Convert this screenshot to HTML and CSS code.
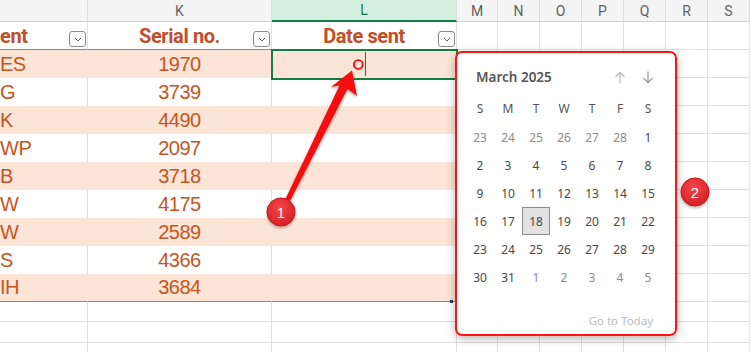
FILE: index.html
```html
<!DOCTYPE html>
<html>
<head>
<meta charset="utf-8">
<link rel="stylesheet" href="styles.css">
</head>
<body>
<div class="sheet">
  <div class="row colhead">
    <div class="cell"></div><div class="cell">K</div><div class="cell sel">L</div><div class="cell">M</div><div class="cell">N</div><div class="cell">O</div><div class="cell">P</div><div class="cell">Q</div><div class="cell">R</div><div class="cell">S</div>
  </div>
  <div class="row hrow">
    <div class="cell t j"><span class="jt">ent</span><span class="dd"><svg viewBox="0 0 8 5" width="8" height="5"><path d="M1 1l3 3 3-3" fill="none" stroke="#666" stroke-width="1"/></svg></span></div>
    <div class="cell t">Serial no.<span class="dd"><svg viewBox="0 0 8 5" width="8" height="5"><path d="M1 1l3 3 3-3" fill="none" stroke="#666" stroke-width="1"/></svg></span></div>
    <div class="cell t">Date sent<span class="dd"><svg viewBox="0 0 8 5" width="8" height="5"><path d="M1 1l3 3 3-3" fill="none" stroke="#666" stroke-width="1"/></svg></span></div>
    <div class="cell"></div><div class="cell"></div><div class="cell"></div><div class="cell"></div><div class="cell"></div><div class="cell"></div><div class="cell"></div>
  </div>
  <div class="row drow band">
    <div class="cell t j"><span class="jt">ES</span></div><div class="cell t">1970</div><div class="cell t active"><span class="caret"></span><span class="selbox"></span></div>
    <div class="cell"></div><div class="cell"></div><div class="cell"></div><div class="cell"></div><div class="cell"></div><div class="cell"></div><div class="cell"></div>
  </div>
  <div class="row drow">
    <div class="cell t j"><span class="jt">G</span></div><div class="cell t">3739</div><div class="cell t"></div>
    <div class="cell"></div><div class="cell"></div><div class="cell"></div><div class="cell"></div><div class="cell"></div><div class="cell"></div><div class="cell"></div>
  </div>
  <div class="row drow band">
    <div class="cell t j"><span class="jt">K</span></div><div class="cell t">4490</div><div class="cell t"></div>
    <div class="cell"></div><div class="cell"></div><div class="cell"></div><div class="cell"></div><div class="cell"></div><div class="cell"></div><div class="cell"></div>
  </div>
  <div class="row drow">
    <div class="cell t j"><span class="jt">WP</span></div><div class="cell t">2097</div><div class="cell t"></div>
    <div class="cell"></div><div class="cell"></div><div class="cell"></div><div class="cell"></div><div class="cell"></div><div class="cell"></div><div class="cell"></div>
  </div>
  <div class="row drow band">
    <div class="cell t j"><span class="jt">B</span></div><div class="cell t">3718</div><div class="cell t"></div>
    <div class="cell"></div><div class="cell"></div><div class="cell"></div><div class="cell"></div><div class="cell"></div><div class="cell"></div><div class="cell"></div>
  </div>
  <div class="row drow">
    <div class="cell t j"><span class="jt">W</span></div><div class="cell t">4175</div><div class="cell t"></div>
    <div class="cell"></div><div class="cell"></div><div class="cell"></div><div class="cell"></div><div class="cell"></div><div class="cell"></div><div class="cell"></div>
  </div>
  <div class="row drow band">
    <div class="cell t j"><span class="jt">W</span></div><div class="cell t">2589</div><div class="cell t"></div>
    <div class="cell"></div><div class="cell"></div><div class="cell"></div><div class="cell"></div><div class="cell"></div><div class="cell"></div><div class="cell"></div>
  </div>
  <div class="row drow">
    <div class="cell t j"><span class="jt">S</span></div><div class="cell t">4366</div><div class="cell t"></div>
    <div class="cell"></div><div class="cell"></div><div class="cell"></div><div class="cell"></div><div class="cell"></div><div class="cell"></div><div class="cell"></div>
  </div>
  <div class="row drow band last">
    <div class="cell t j"><span class="jt">IH</span></div><div class="cell t">3684</div><div class="cell t"><span class="handle"></span></div>
    <div class="cell"></div><div class="cell"></div><div class="cell"></div><div class="cell"></div><div class="cell"></div><div class="cell"></div><div class="cell"></div>
  </div>
  <div class="row erow e1">
    <div class="cell"></div><div class="cell"></div><div class="cell"></div><div class="cell"></div><div class="cell"></div><div class="cell"></div><div class="cell"></div><div class="cell"></div><div class="cell"></div><div class="cell"></div>
  </div>
  <div class="row erow">
    <div class="cell"></div><div class="cell"></div><div class="cell"></div><div class="cell"></div><div class="cell"></div><div class="cell"></div><div class="cell"></div><div class="cell"></div><div class="cell"></div><div class="cell"></div>
  </div>
  <div class="row erow">
    <div class="cell"></div><div class="cell"></div><div class="cell"></div><div class="cell"></div><div class="cell"></div><div class="cell"></div><div class="cell"></div><div class="cell"></div><div class="cell"></div><div class="cell"></div>
  </div>
</div>

<div class="cal">
  <div class="cal-head">
    <span class="cal-title">March 2025</span>
    <span class="cal-nav">
      <span class="navbtn"><svg viewBox="0 0 12 14" width="12" height="13"><path d="M6 13.5V1.5M1.2 6.3L6 1.5l4.8 4.8" fill="none" stroke="#a9a9a9" stroke-width="1.1"/></svg></span>
      <span class="navbtn"><svg viewBox="0 0 12 14" width="12" height="13"><path d="M6 0.5v12M1.2 7.7L6 12.5l4.8-4.8" fill="none" stroke="#8a8a8a" stroke-width="1.1"/></svg></span>
    </span>
  </div>
  <div class="cal-grid">
    <span class="wd">S</span><span class="wd">M</span><span class="wd">T</span><span class="wd">W</span><span class="wd">T</span><span class="wd">F</span><span class="wd">S</span>
    <span class="d out">23</span><span class="d out">24</span><span class="d out">25</span><span class="d out">26</span><span class="d out">27</span><span class="d out">28</span><span class="d">1</span>
    <span class="d">2</span><span class="d">3</span><span class="d">4</span><span class="d">5</span><span class="d">6</span><span class="d">7</span><span class="d">8</span>
    <span class="d">9</span><span class="d">10</span><span class="d">11</span><span class="d">12</span><span class="d">13</span><span class="d">14</span><span class="d">15</span>
    <span class="d">16</span><span class="d">17</span><span class="d today">18</span><span class="d">19</span><span class="d">20</span><span class="d">21</span><span class="d">22</span>
    <span class="d">23</span><span class="d">24</span><span class="d">25</span><span class="d">26</span><span class="d">27</span><span class="d">28</span><span class="d">29</span>
    <span class="d">30</span><span class="d">31</span><span class="d out">1</span><span class="d out">2</span><span class="d out">3</span><span class="d out">4</span><span class="d out">5</span>
  </div>
  <div class="cal-foot">Go to Today</div>
</div>

<svg class="annot" width="750" height="352" viewBox="0 0 750 352">
  <defs>
    <radialGradient id="bg" cx="0.45" cy="0.35" r="0.7">
      <stop offset="0" stop-color="#f2474b"/>
      <stop offset="1" stop-color="#d61c24"/>
    </radialGradient>
    <filter id="sh" x="-50%" y="-50%" width="200%" height="200%">
      <feDropShadow dx="0" dy="1.5" stdDeviation="1.5" flood-color="#000" flood-opacity="0.35"/>
    </filter>
  </defs>
  <circle cx="358.3" cy="64.5" r="4.4" fill="none" stroke="#f01414" stroke-width="1.9"/>
  <polygon points="352,70.5 357,96 347.5,89 289,203 284.5,201 339.5,85.5 331,87" fill="#f70f0f" filter="url(#sh)"/>
  <g filter="url(#sh)">
    <circle cx="281" cy="212" r="14" fill="url(#bg)" stroke="#c3161c" stroke-width="1"/>
    <circle cx="695" cy="192" r="14" fill="url(#bg)" stroke="#c3161c" stroke-width="1"/>
  </g>
  <text x="281" y="217.5" class="badge">1</text>
  <text x="695" y="197.5" class="badge">2</text>
</svg>
</body>
</html>
```

FILE: styles.css
```css
html, body {
  margin: 0;
  padding: 0;
}
body {
  width: 750px;
  height: 352px;
  overflow: hidden;
  position: relative;
  background: #fff;
  font-family: "Liberation Sans", Arial, sans-serif;
}
.sheet {
  display: flex;
  flex-direction: column;
}
.row {
  display: grid;
  grid-template-columns: 88px 184px 185px 41px repeat(6, 42px);
}
.cell {
  box-sizing: border-box;
  border-right: 1px solid #e1e1e1;
  border-bottom: 1px solid #e1e1e1;
  position: relative;
}
.colhead {
  height: 22px;
}
.colhead .cell {
  background: #f4f4f4;
  border-right-color: #dcdcdc;
  border-bottom-color: #d2d2d2;
  display: flex;
  align-items: center;
  justify-content: center;
  font: 14px Roboto, sans-serif;
  color: #626262;
}
.colhead .sel {
  background: #d3efdf;
  color: #107c41;
  border-bottom: 2px solid #137e43;
}
.hrow, .drow {
  height: 28px;
}
.erow {
  height: 21px;
}
.erow.e1 {
  height: 20px;
}
.t {
  border-bottom: 0;
  display: flex;
  align-items: center;
  justify-content: center;
  font-size: 20px;
  letter-spacing: -0.5px;
  color: #c4561f;
  white-space: nowrap;
}
.hrow .t {
  border-bottom: 1px solid #e36c34;
  font: 700 20px Roboto, sans-serif;
  letter-spacing: -0.4px;
  color: #c0502a;
}
.band .t {
  background: #fce4d6;
  border-right-color: #fce4d6;
}
.last .t {
  border-bottom: 1px solid #e36c34;
}
.t.j {
  justify-content: flex-start;
}
.jt {
  margin-left: 0;
}
.dd {
  position: absolute;
  right: 1px;
  top: 9px;
  width: 17px;
  height: 16px;
  box-sizing: border-box;
  border: 1px solid #8c8c8c;
  border-radius: 3px;
  background: #fff;
  display: flex;
  align-items: center;
  justify-content: center;
}
.caret {
  position: absolute;
  left: 93px;
  top: 2px;
  width: 1px;
  height: 24px;
  background: #9b3f1a;
}
.selbox {
  position: absolute;
  top: -1px;
  left: -1px;
  right: -2px;
  bottom: -2px;
  border: 2px solid #137e43;
  z-index: 2;
}
.handle {
  position: absolute;
  right: 3px;
  bottom: -2px;
  width: 3px;
  height: 3px;
  background: #1f3a5f;
}

/* calendar popup */
.cal {
  position: absolute;
  left: 455px;
  top: 51px;
  width: 222px;
  height: 285px;
  box-sizing: border-box;
  border: 2px solid #ff1414;
  border-radius: 7px;
  background: rgba(255, 255, 255, 0.9);
  box-shadow: 0 3px 10px rgba(0, 0, 0, 0.28);
  padding: 7px 13px 0 9px;
  font-family: "Noto Sans", "Open Sans", sans-serif;
  z-index: 3;
}
.cal-head {
  height: 34px;
  display: flex;
  align-items: center;
}
.cal-title {
  padding-left: 10px;
  font-weight: 600;
  font-size: 13.5px;
  color: #555;
}
.cal-nav {
  margin-left: auto;
  display: flex;
}
.navbtn {
  width: 28px;
  display: flex;
  justify-content: center;
}
.cal-grid {
  display: grid;
  grid-template-columns: repeat(7, 28px);
  grid-template-rows: 29px;
  grid-auto-rows: 28px;
  font-size: 12px;
}
.wd, .d {
  display: flex;
  align-items: center;
  justify-content: center;
  color: #555;
}
.d {
  color: #4a4a4a;
}
.d.out {
  color: #8c8c8c;
}
.d.today {
  box-sizing: border-box;
  border: 1px solid #8a8a8a;
  background: #e2e2e2;
}
.cal-foot {
  margin-top: 15px;
  height: 28px;
  display: flex;
  align-items: center;
  justify-content: flex-end;
  padding-right: 9px;
  color: #bcbcbc;
  font-size: 11.5px;
}

/* annotation overlay */
.annot {
  position: absolute;
  left: 0;
  top: 0;
  z-index: 5;
  pointer-events: none;
}
.badge {
  font: 15px "Liberation Sans", Arial, sans-serif;
  fill: #fff;
  text-anchor: middle;
}
```
